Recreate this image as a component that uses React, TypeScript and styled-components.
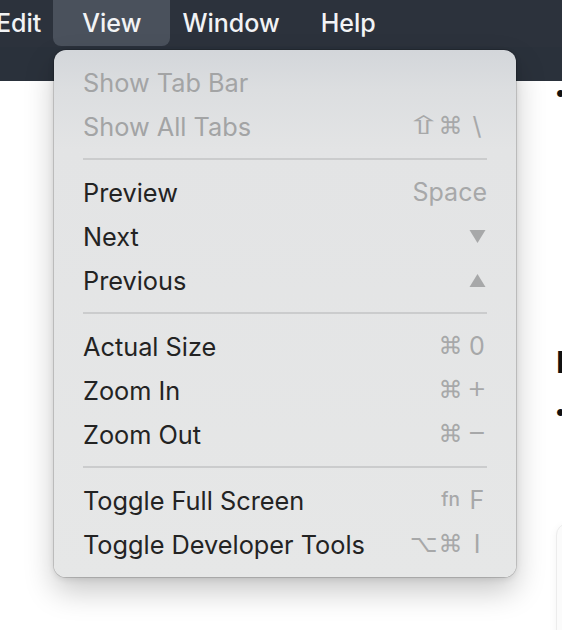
import React from 'react';
import styled, {createGlobalStyle} from 'styled-components';

const GlobalStyle = createGlobalStyle`
  html, body {
    margin: 0;
    padding: 0;
    width: 562px;
    height: 630px;
    overflow: hidden;
    background: #ffffff;
  }
  body {
    font-family: "Inter", "Liberation Sans", "DejaVu Sans", sans-serif;
  }
`;

const Screen = styled.div`
  position: relative;
  width: 562px;
  height: 630px;
  overflow: hidden;
  display: flex;
  flex-direction: column;
`;

const MenuBar = styled.nav`
  height: 47px;
  flex-shrink: 0;
  display: flex;
  align-items: center;
  gap: 41px;
  margin-left: -4px;
  background: #2c323c;
  color: #f2f3f5;
  font-size: 25px;
  font-weight: 500;
`;

const BarItem = styled.span<{ $active?: boolean }>`
  position: relative;
  line-height: 47px;
  z-index: 0;

  &::before {
    content: '';
    display: ${({$active}) => ($active ? 'block' : 'none')};
    position: absolute;
    top: -10px;
    bottom: 1px;
    left: -29px;
    right: -29px;
    border-radius: 8px;
    background: #4a515c;
    z-index: -1;
  }
`;

const Toolbar = styled.div`
  height: 34px;
  flex-shrink: 0;
  background: #2a313b;
`;

const Page = styled.main`
  flex: 1;
  display: flex;
  flex-direction: column;
  padding-left: 556px;
  white-space: nowrap;
  font-family: "Liberation Sans", sans-serif;
  color: #111;
`;

const Bullet = styled.div<{ $top: number }>`
  margin-top: ${({$top}) => $top}px;
  font-size: 26px;
  line-height: 24px;
  height: 24px;
`;

const Heading = styled.h2`
  margin: 237px 0 0;
  font-size: 32px;
  line-height: 40px;
  font-weight: 700;
`;

const Card = styled.div`
  margin-top: 99px;
  width: 300px;
  height: 140px;
  border: 1px solid #ececec;
  border-radius: 12px;
  background: #fbfbfb;
  box-shadow: 0 2px 8px rgba(0, 0, 0, 0.05);
`;

const Menu = styled.div`
  position: absolute;
  top: 50px;
  left: 54px;
  width: 462px;
  box-sizing: border-box;
  padding: 10px 29px 11px;
  border-radius: 12px;
  background: linear-gradient(180deg, #d3d6da 0px, #dcdee0 40px, #e3e4e5 100px, #e6e7e7 100%);
  box-shadow: 0 0 0 1px rgba(0, 0, 0, 0.14), 0 14px 30px rgba(0, 0, 0, 0.22), 0 2px 6px rgba(0, 0, 0, 0.1);
  display: flex;
  flex-direction: column;
`;

const Row = styled.div<{ $disabled?: boolean }>`
  height: 44px;
  display: flex;
  align-items: center;
  justify-content: space-between;
  font-size: 25.3px;
  color: ${({$disabled}) => ($disabled ? '#a3a4a5' : '#232323')};
`;

const Separator = styled.div`
  height: 22px;
  display: flex;
  align-items: center;

  &::after {
    content: '';
    flex: 1;
    height: 2px;
    background: #cbcccd;
  }
`;

const Shortcut = styled.span`
  display: flex;
  align-items: center;
  margin-right: -3px;
  color: #a7a8a9;
`;

const Mod = styled.span<{ $size: number; $text?: boolean; $stretch?: number }>`
  display: flex;
  justify-content: center;
  width: 27px;
  line-height: 30px;
  font-family: ${({$text}) => ($text ? '"Inter", sans-serif' : '"DejaVu Sans", sans-serif')};
  font-size: ${({$size}) => $size}px;
  font-weight: ${({$text}) => ($text ? 500 : 400)};
  transform: scaleX(${({$stretch}) => $stretch ?? 1});
`;

const Key = styled.span<{ $wide?: boolean; $sym?: boolean }>`
  display: flex;
  justify-content: ${({$wide}) => ($wide ? 'flex-end' : 'center')};
  width: ${({$wide}) => ($wide ? 'auto' : '26px')};
  margin-right: ${({$wide}) => ($wide ? '3px' : '0')};
  line-height: 30px;
  font-family: "Inter", sans-serif;
  font-size: ${({$sym}) => ($sym ? '31px' : '25px')};
  font-weight: ${({$sym}) => ($sym ? 300 : 400)};
  transform: translateY(${({$sym}) => ($sym ? '-3px' : '0')});
`;

const Tri: React.FC<{ up?: boolean }> = ({up}) => (
  <svg width="17" height="15" viewBox="0 0 17 15">
    <polygon points={up ? '8.5,1 16.5,14 0.5,14' : '0.5,1 16.5,1 8.5,14'} fill="#a7a8a9"/>
  </svg>
);

const modSize: Record<string, number> = {'⇧': 25, '⌘': 24, '⌥': 24, fn: 19};
const modStretch: Record<string, number> = {'⇧': 1.7};

interface IItem {
  label: string;
  disabled?: boolean;
  mods?: string[];
  keyText?: React.ReactNode;
  wide?: boolean;
  sym?: boolean;
}

const groups: IItem[][] = [
  [
    {label: 'Show Tab Bar', disabled: true},
    {label: 'Show All Tabs', disabled: true, mods: ['⇧', '⌘'], keyText: '\\'},
  ],
  [
    {label: 'Preview', keyText: 'Space', wide: true},
    {label: 'Next', keyText: <Tri/>},
    {label: 'Previous', keyText: <Tri up/>},
  ],
  [
    {label: 'Actual Size', mods: ['⌘'], keyText: '0'},
    {label: 'Zoom In', mods: ['⌘'], keyText: '+', sym: true},
    {label: 'Zoom Out', mods: ['⌘'], keyText: '−', sym: true},
  ],
  [
    {label: 'Toggle Full Screen', mods: ['fn'], keyText: 'F'},
    {label: 'Toggle Developer Tools', mods: ['⌥', '⌘'], keyText: 'I'},
  ],
];

const App: React.FC = () => (
  <>
    <GlobalStyle/>
    <Screen>
      <MenuBar>
        <BarItem>Edit</BarItem>
        <BarItem $active>View</BarItem>
        <BarItem>Window</BarItem>
        <BarItem>Help</BarItem>
      </MenuBar>
      <Toolbar/>
      <Page>
        <Bullet $top={0}>• Open the project</Bullet>
        <Heading>Installation</Heading>
        <Bullet $top={18}>• Download the package</Bullet>
        <Card/>
      </Page>
      <Menu>
        {groups.map((group, gi) => (
          <React.Fragment key={gi}>
            {gi > 0 && <Separator/>}
            {group.map(item => (
              <Row key={item.label} $disabled={item.disabled}>
                <span>{item.label}</span>
                {item.keyText && (
                  <Shortcut>
                    {item.mods && item.mods.map(m => (
                      <Mod key={m} $size={modSize[m]} $stretch={modStretch[m]} $text={m === 'fn'}>{m}</Mod>
                    ))}
                    <Key $wide={item.wide} $sym={item.sym}>{item.keyText}</Key>
                  </Shortcut>
                )}
              </Row>
            ))}
          </React.Fragment>
        ))}
      </Menu>
    </Screen>
  </>
);

export default App;
